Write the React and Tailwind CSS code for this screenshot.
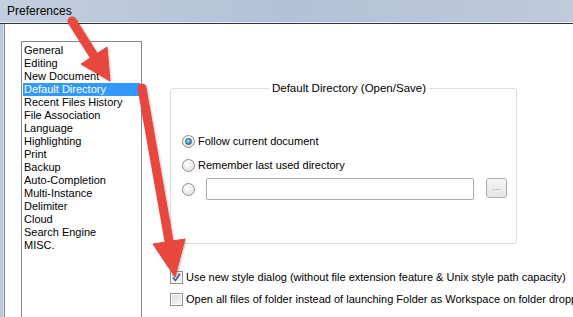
import React from 'react';

const sections = [
    'General',
    'Editing',
    'New Document',
    'Default Directory',
    'Recent Files History',
    'File Association',
    'Language',
    'Highlighting',
    'Print',
    'Backup',
    'Auto-Completion',
    'Multi-Instance',
    'Delimiter',
    'Cloud',
    'Search Engine',
    'MISC.',
];

const Radio = ({ checked }) => (
    <span className="w-[13px] h-[13px] shrink-0 rounded-full border border-[#8f8f8f] bg-[radial-gradient(circle_at_40%_35%,#ffffff,#dcdcdc)] flex items-center justify-center">
        {checked && (
            <span className="w-[7px] h-[7px] rounded-full border border-[#1f4f74] bg-[radial-gradient(circle_at_40%_35%,#9fdcff,#1a6aa3)]" />
        )}
    </span>
);

const Check = ({ checked }) => (
    <span className="w-[13px] h-[13px] shrink-0 border border-[#8f8f8f] bg-white p-[1px] flex">
        <span className="flex-1 bg-gradient-to-br from-[#dcdcdc] to-[#f8f8f8] flex items-center justify-center">
            {checked && (
                <svg width="9" height="9" viewBox="0 0 9 9">
                    <path d="M1 4.5 L3.5 7.5 L8 0.8" fill="none" stroke="#4a5f97" strokeWidth="1.6" />
                </svg>
            )}
        </span>
    </span>
);

export default function App() {
    return (
        <div className="relative w-[573px] h-[317px] overflow-hidden bg-white text-black font-['Liberation_Sans',Arial,sans-serif]">
            {/* title bar */}
            <div className="h-[22px] flex items-center pl-[7px] bg-gradient-to-r from-[#c3cfdf] via-[#b2c1d6] to-[#bfcadb] text-[12px]">
                Preferences
            </div>
            <div className="h-px bg-[#e6edf5]" />
            <div className="h-px bg-[#2d3540]" />

            <div className="flex h-full">
                <div className="w-[3px] shrink-0 bg-[#bac8da]" />
                <div className="w-px shrink-0 bg-[#d8e1ec]" />
                <div className="w-px shrink-0 bg-[#7c8898]" />

                <div className="flex-1 min-w-0 flex pl-[16px] pt-[17px]">
                    {/* section list */}
                    <ul className="w-[121px] h-[300px] shrink-0 border border-[#828790] pt-[2px] px-px text-[11px] leading-[13px]">
                        {sections.map((s, i) => (
                            <li
                                key={i}
                                className={i === 3 ? 'h-[13px] pl-px bg-[#3399ff] text-white' : 'h-[13px] pl-px'}
                            >
                                {s}
                            </li>
                        ))}
                    </ul>

                    <div className="ml-[28px] mt-[40px] shrink-0 flex flex-col text-[11px]">
                        <fieldset className="w-[347px] h-[163px] border border-[#d5dfe5] rounded-[3px] pl-[11px]">
                            <legend className="mx-auto px-[3px] text-[11.5px] leading-[14px]">
                                Default Directory (Open/Save)
                            </legend>
                            <div className="mt-[34px] flex flex-col">
                                <div className="h-[24px] flex items-center gap-[3px]">
                                    <Radio checked />
                                    <span>Follow current document</span>
                                </div>
                                <div className="h-[24px] flex items-center gap-[3px]">
                                    <Radio />
                                    <span>Remember last used directory</span>
                                </div>
                                <div className="h-[24px] flex items-center">
                                    <Radio />
                                    <div className="ml-[11px] w-[268px] h-[22px] border border-[#ababab] rounded-[2px] bg-white" />
                                    <div className="ml-[12px] -mt-[3px] w-[21px] h-[20px] border border-[#acacac] rounded-[3px] bg-gradient-to-b from-[#f4f4f4] to-[#e6e6e6] flex items-center justify-center text-[9px] text-[#8a7fb8] leading-none">
                                        ...
                                    </div>
                                </div>
                            </div>
                        </fieldset>

                        <div className="mt-[22px] flex flex-col whitespace-nowrap">
                            <div className="h-[22px] flex items-center gap-[3px]">
                                <Check checked />
                                <span>Use new style dialog (without file extension feature &amp; Unix style path capacity)</span>
                            </div>
                            <div className="h-[22px] flex items-center gap-[3px]">
                                <Check />
                                <span>Open all files of folder instead of launching Folder as Workspace on folder dropping</span>
                            </div>
                        </div>
                    </div>
                </div>
            </div>

            {/* annotation arrows */}
            <svg className="absolute left-0 top-0 pointer-events-none" width="573" height="317" viewBox="0 0 573 317">
                <defs>
                    <filter id="sh" x="-20%" y="-20%" width="140%" height="140%">
                        <feDropShadow dx="1" dy="1" stdDeviation="1" floodColor="#000" floodOpacity="0.25" />
                    </filter>
                </defs>
                <g fill="#e8473d" stroke="#e8473d" filter="url(#sh)">
                    <line x1="72" y1="21" x2="94" y2="56" strokeWidth="9" strokeLinecap="round" />
                    <polygon points="81,64 107,47 110,81" strokeWidth="1" strokeLinejoin="round" />
                    <line x1="142" y1="88" x2="169" y2="241" strokeWidth="9" strokeLinecap="round" />
                    <polygon points="153,244 185,239 175,277" strokeWidth="1" strokeLinejoin="round" />
                </g>
            </svg>
        </div>
    );
}
